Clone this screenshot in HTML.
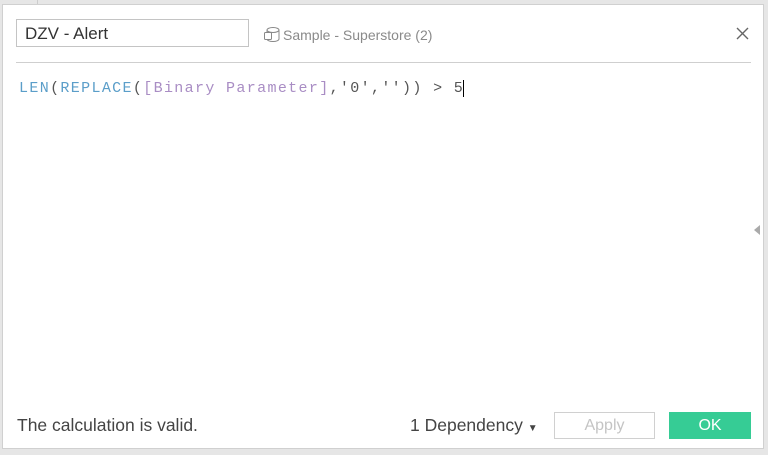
<!DOCTYPE html>
<html><head><style>
body{margin:0;width:768px;height:455px;background:#e6e6e6;position:relative;overflow:hidden;font-family:"Liberation Sans",sans-serif}
.dlg{position:absolute;left:2px;top:4px;width:762px;height:445px;background:#fff;border:1px solid #d0d0d0;box-sizing:border-box}
.name{position:absolute;left:13px;top:14px;width:233px;height:28px;border:1px solid #c4c4c4;box-sizing:border-box;font-size:17px;color:#333;padding:4px 8px}
.ds{position:absolute;left:260px;top:21px;font-size:14px;color:#8a8a8a}
.x{position:absolute;left:733px;top:22px}
.hr{position:absolute;left:13px;top:57px;width:735px;height:1px;background:#cfcfcf}
.code{position:absolute;left:16px;top:75px;font-family:"Liberation Mono",monospace;font-size:15px;letter-spacing:1.35px;color:#555}
.b{color:#5b9ec9}.p{color:#a98dc4}
.valid{position:absolute;left:14px;top:410px;font-size:17.5px;color:#444}
.dep{position:absolute;left:407px;top:410px;font-size:17.5px;color:#444}
.apply{position:absolute;left:551px;top:407px;width:101px;height:27px;border:1px solid #d0d0d0;box-sizing:border-box;text-align:center;font-size:16px;color:#c4c4c4;line-height:25px}
.ok{position:absolute;left:666px;top:407px;width:82px;height:27px;background:#36cc95;text-align:center;font-size:16px;color:#fff;line-height:27px}
.tri{position:absolute;left:751px;top:220px;width:0;height:0;border-top:5px solid transparent;border-bottom:5px solid transparent;border-right:6px solid #aaa}
</style></head><body>
<div style="position:absolute;left:37px;top:0;width:1px;height:4px;background:#ccc"></div>
<div class="dlg">
<div class="name">DZV - Alert</div>
<div class="ds"><svg width="20" height="18" viewBox="0 0 20 18" style="vertical-align:-4px"><ellipse cx="10" cy="4" rx="6" ry="2.5" fill="none" stroke="#888"/><path d="M4 4v9c0 1.4 2.7 2.5 6 2.5s6-1.1 6-2.5V4" fill="none" stroke="#888"/><rect x="1.5" y="6.5" width="7" height="7" rx="1" fill="#fff" stroke="#888"/></svg>Sample - Superstore (2)</div>
<svg class="x" width="13" height="13" viewBox="0 0 13 13"><path d="M1 1L12 12M12 1L1 12" stroke="#666" stroke-width="1.4"/></svg>
<div class="hr"></div>
<div class="code"><span class="b">LEN</span>(<span class="b">REPLACE</span>(<span class="p">[Binary Parameter]</span>,'0','')) &gt; 5<span style="border-left:1px solid #000;margin-left:-1px"></span></div>
<div class="valid">The calculation is valid.</div>
<div class="dep">1 Dependency <span style="font-size:10px">▼</span></div>
<div class="apply">Apply</div>
<div class="ok">OK</div>
<div class="tri"></div>
</div>
</body></html>
